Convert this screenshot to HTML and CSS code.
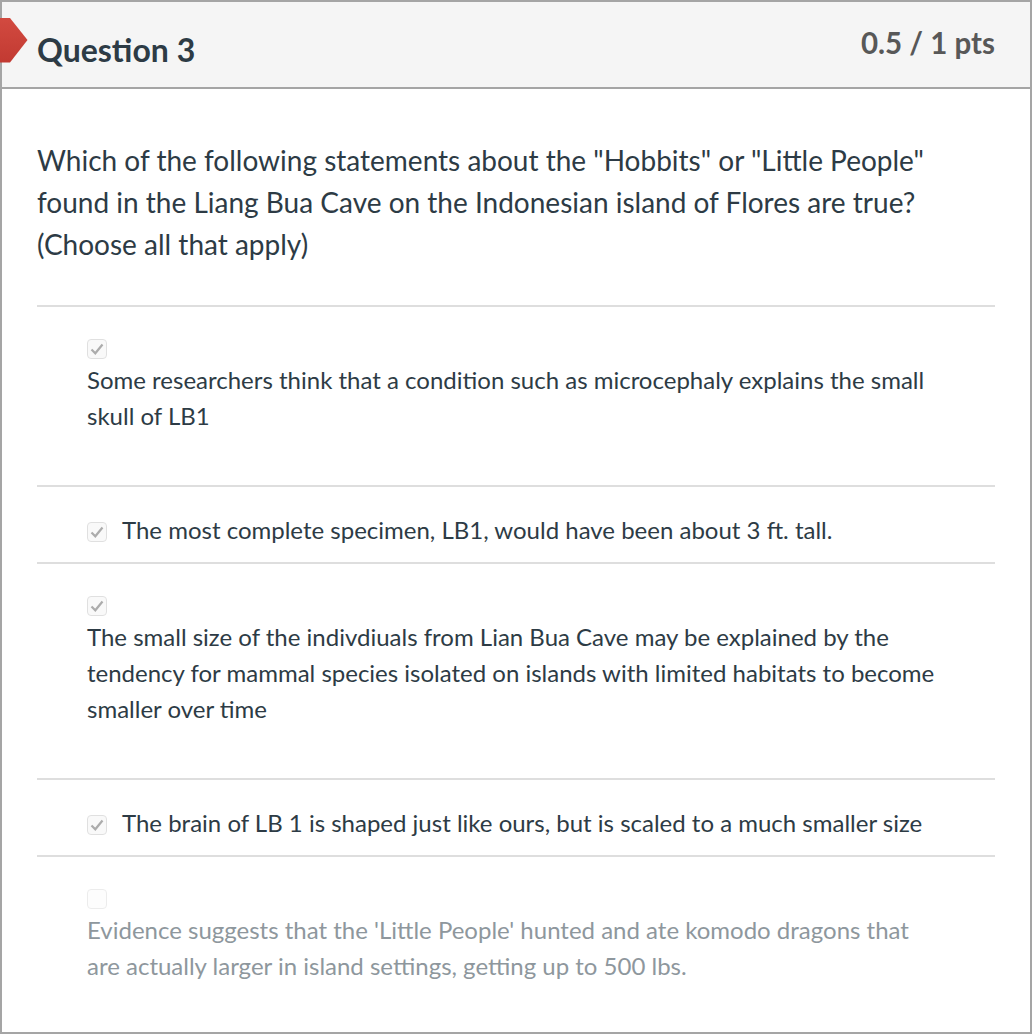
FILE: index.html
```html
<!DOCTYPE html>
<html>
<head>
<meta charset="utf-8">
<link rel="stylesheet" href="styles.css">
</head>
<body>
<div class="question">
  <svg class="flag" width="28" height="46" viewBox="0 0 28 46">
    <defs>
      <linearGradient id="fg" x1="0" y1="0" x2="0" y2="1">
        <stop offset="0" stop-color="#d24a40"/>
        <stop offset="1" stop-color="#c23a32"/>
      </linearGradient>
    </defs>
    <polygon points="0,0 10,0 27.5,22 10,44.5 0,44.5" fill="url(#fg)"/>
  </svg>
  <div class="header">
    <div class="name">Question 3</div>
    <div class="points">0.5 / 1 pts</div>
  </div>
  <div class="content">
    <div class="question-text">Which of the following statements about the "Hobbits" or "Little People" found in the Liang Bua Cave on the Indonesian island of Flores are true? (Choose all that apply)</div>
    <div class="answers">
      <div class="answer stacked">
        <span class="check checked"><svg width="20" height="20" viewBox="0 0 20 20"><rect x="0.5" y="0.5" width="19" height="19" rx="3.5" fill="#f9f9f9" stroke="#e0e0e0"/><polyline points="4.5,10.5 8.3,14.3 15.5,5.5" fill="none" stroke="#acacac" stroke-width="2.2"/></svg></span>
        <div class="answer-text">Some researchers think that a condition such as microcephaly explains the small skull of LB1</div>
      </div>
      <div class="answer inline">
        <span class="check checked"><svg width="20" height="20" viewBox="0 0 20 20"><rect x="0.5" y="0.5" width="19" height="19" rx="3.5" fill="#f9f9f9" stroke="#e0e0e0"/><polyline points="4.5,10.5 8.3,14.3 15.5,5.5" fill="none" stroke="#acacac" stroke-width="2.2"/></svg></span><span class="answer-text">The most complete specimen, LB1, would have been about 3 ft. tall.</span>
      </div>
      <div class="answer stacked">
        <span class="check checked"><svg width="20" height="20" viewBox="0 0 20 20"><rect x="0.5" y="0.5" width="19" height="19" rx="3.5" fill="#f9f9f9" stroke="#e0e0e0"/><polyline points="4.5,10.5 8.3,14.3 15.5,5.5" fill="none" stroke="#acacac" stroke-width="2.2"/></svg></span>
        <div class="answer-text">The small size of the indivdiuals from Lian Bua Cave may be explained by the tendency for mammal species isolated on islands with limited habitats to become smaller over time</div>
      </div>
      <div class="answer inline">
        <span class="check checked"><svg width="20" height="20" viewBox="0 0 20 20"><rect x="0.5" y="0.5" width="19" height="19" rx="3.5" fill="#f9f9f9" stroke="#e0e0e0"/><polyline points="4.5,10.5 8.3,14.3 15.5,5.5" fill="none" stroke="#acacac" stroke-width="2.2"/></svg></span><span class="answer-text">The brain of LB 1 is shaped just like ours, but is scaled to a much smaller size</span>
      </div>
      <div class="answer stacked last">
        <span class="check"><svg width="20" height="20" viewBox="0 0 20 20"><rect x="0.5" y="0.5" width="19" height="19" rx="3.5" fill="#fdfdfd" stroke="#ececec"/></svg></span>
        <div class="answer-text muted">Evidence suggests that the 'Little People' hunted and ate komodo dragons that are actually larger in island settings, getting up to 500 lbs.</div>
      </div>
    </div>
  </div>
</div>
</body>
</html>
```

FILE: styles.css
```css
html, body {
  margin: 0;
  padding: 0;
  background: #ffffff;
}

body {
  font-family: Lato, "Noto Sans", sans-serif;
  color: #2d3b45;
}

.question {
  position: relative;
  width: 1032px;
  height: 1034px;
  box-sizing: border-box;
  border: 2px solid #a5a5a5;
  background: #fff;
}

.flag {
  position: absolute;
  left: -2px;
  top: 16px;
  display: block;
}

.header {
  height: 87px;
  box-sizing: border-box;
  background: #f5f5f5;
  border-bottom: 2px solid #a5a5a5;
  display: flex;
  justify-content: space-between;
  align-items: flex-start;
  padding: 0 35px;
}

.name {
  font-size: 32px;
  font-weight: 700;
  line-height: 40px;
  margin-top: 28px;
  color: #2d3b45;
}

.points {
  font-size: 29.5px;
  font-weight: 700;
  line-height: 34px;
  margin-top: 24px;
  color: #585858;
}

.content {
  padding: 50px 35px 0 35px;
}

.question-text {
  font-size: 28px;
  line-height: 42px;
  padding-right: 60px;
}

.answers {
  margin-top: 40px;
}

.answer {
  border-top: 2px solid #dedede;
  padding-left: 50px;
  font-size: 24px;
  line-height: 36px;
}

.answer.stacked {
  padding-top: 32px;
  padding-bottom: 51px;
}

.answer.stacked .check {
  display: block;
  width: 20px;
  height: 20px;
  margin-bottom: 3px;
}

.answer.stacked .answer-text {
  padding-right: 60px;
}

.answer.inline {
  padding-top: 25px;
  padding-bottom: 14px;
}

.answer.inline .check {
  display: inline-block;
  width: 20px;
  height: 20px;
  margin-right: 15px;
  vertical-align: -3px;
}

.check svg {
  display: block;
}

.answer-text.muted {
  color: #8e979d;
}
```
